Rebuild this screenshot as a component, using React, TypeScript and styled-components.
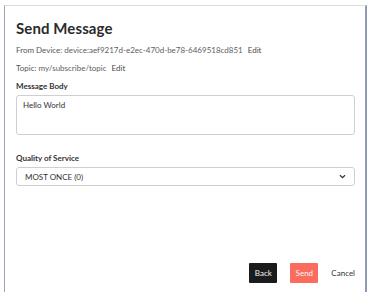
import React from "react";
import styled, { createGlobalStyle } from "styled-components";

const Global = createGlobalStyle`
  html, body { margin: 0; padding: 0; background: #fff; }
  body { font-family: Lato, "Open Sans", sans-serif; color: #333; }
  * { box-sizing: border-box; }
`;

const Modal = styled.div`
  margin: 5px 5px 5px 4px;
  height: 287px;
  border-top: 1px solid #dcdcdc;
  border-left: 1px solid #9aa5ba;
  border-right: 2px solid #8f9bb2;
  display: flex;
  flex-direction: column;
  padding: 13px 10px 9px 11px;
`;

const Title = styled.h1`
  margin: 0 0 8px 0;
  font-size: 15px;
  font-weight: 700;
  color: #2b2b2b;
  line-height: 18px;
  letter-spacing: 0.1px;
`;

const InfoRow = styled.div`
  font-size: 8px;
  line-height: 10px;
  color: #555;
  display: flex;
  gap: 5px;
  margin-bottom: 8px;
`;

const Value = styled.span`
  color: #5e5e5e;
`;

const EditLink = styled.span`
  color: #4a4a4a;
  font-weight: 400;
`;

const Label = styled.div`
  font-size: 8px;
  font-weight: 700;
  color: #333;
  line-height: 10px;
  margin-bottom: 4px;
`;

const TextArea = styled.div`
  height: 40px;
  border: 1px solid #cfcfcf;
  border-radius: 3px;
  padding: 4px 6px;
  font-size: 8px;
  line-height: 10px;
  color: #333;
  margin-bottom: 18px;
`;

const Select = styled.div`
  height: 19px;
  border: 1px solid #cfcfcf;
  border-radius: 3px;
  display: flex;
  align-items: center;
  justify-content: space-between;
  padding: 0 8px 0 8px;
  font-size: 8px;
  color: #333;
`;

const Footer = styled.div`
  margin-top: auto;
  display: flex;
  justify-content: flex-end;
  align-items: center;
  gap: 13px;
`;

const Btn = styled.button<{ $variant: "dark" | "primary" | "plain" }>`
  height: 20px;
  padding: 0 ${(p) => (p.$variant === "plain" ? "0" : "5px")};
  min-width: ${(p) => (p.$variant === "plain" ? "0" : "28px")};
  border: none;
  border-radius: 1px;
  font-family: Lato, "Open Sans", sans-serif;
  font-size: 8px;
  background: ${(p) =>
    p.$variant === "dark" ? "#1b1b1b" : p.$variant === "primary" ? "#fb6c5f" : "transparent"};
  color: ${(p) => (p.$variant === "plain" ? "#333" : "#f4f4f4")};
`;

export default function App() {
  return (
    <>
      <Global />
      <Modal>
        <Title>Send Message</Title>
        <InfoRow>
          <span>
            From Device: <Value>device:aef9217d-e2ec-470d-be78-6469518cd851</Value>
          </span>
          <EditLink>Edit</EditLink>
        </InfoRow>
        <InfoRow>
          <span>
            Topic: <Value>my/subscribe/topic</Value>
          </span>
          <EditLink>Edit</EditLink>
        </InfoRow>
        <Label>Message Body</Label>
        <TextArea>Hello World</TextArea>
        <Label>Quality of Service</Label>
        <Select>
          <span>MOST ONCE (0)</span>
          <svg width="7" height="5" viewBox="0 0 7 5">
            <path d="M1 1.2 L3.5 3.6 L6 1.2" fill="none" stroke="#333" strokeWidth="1.3" />
          </svg>
        </Select>
        <Footer>
          <Btn $variant="dark">Back</Btn>
          <Btn $variant="primary">Send</Btn>
          <Btn $variant="plain">Cancel</Btn>
        </Footer>
      </Modal>
    </>
  );
}
